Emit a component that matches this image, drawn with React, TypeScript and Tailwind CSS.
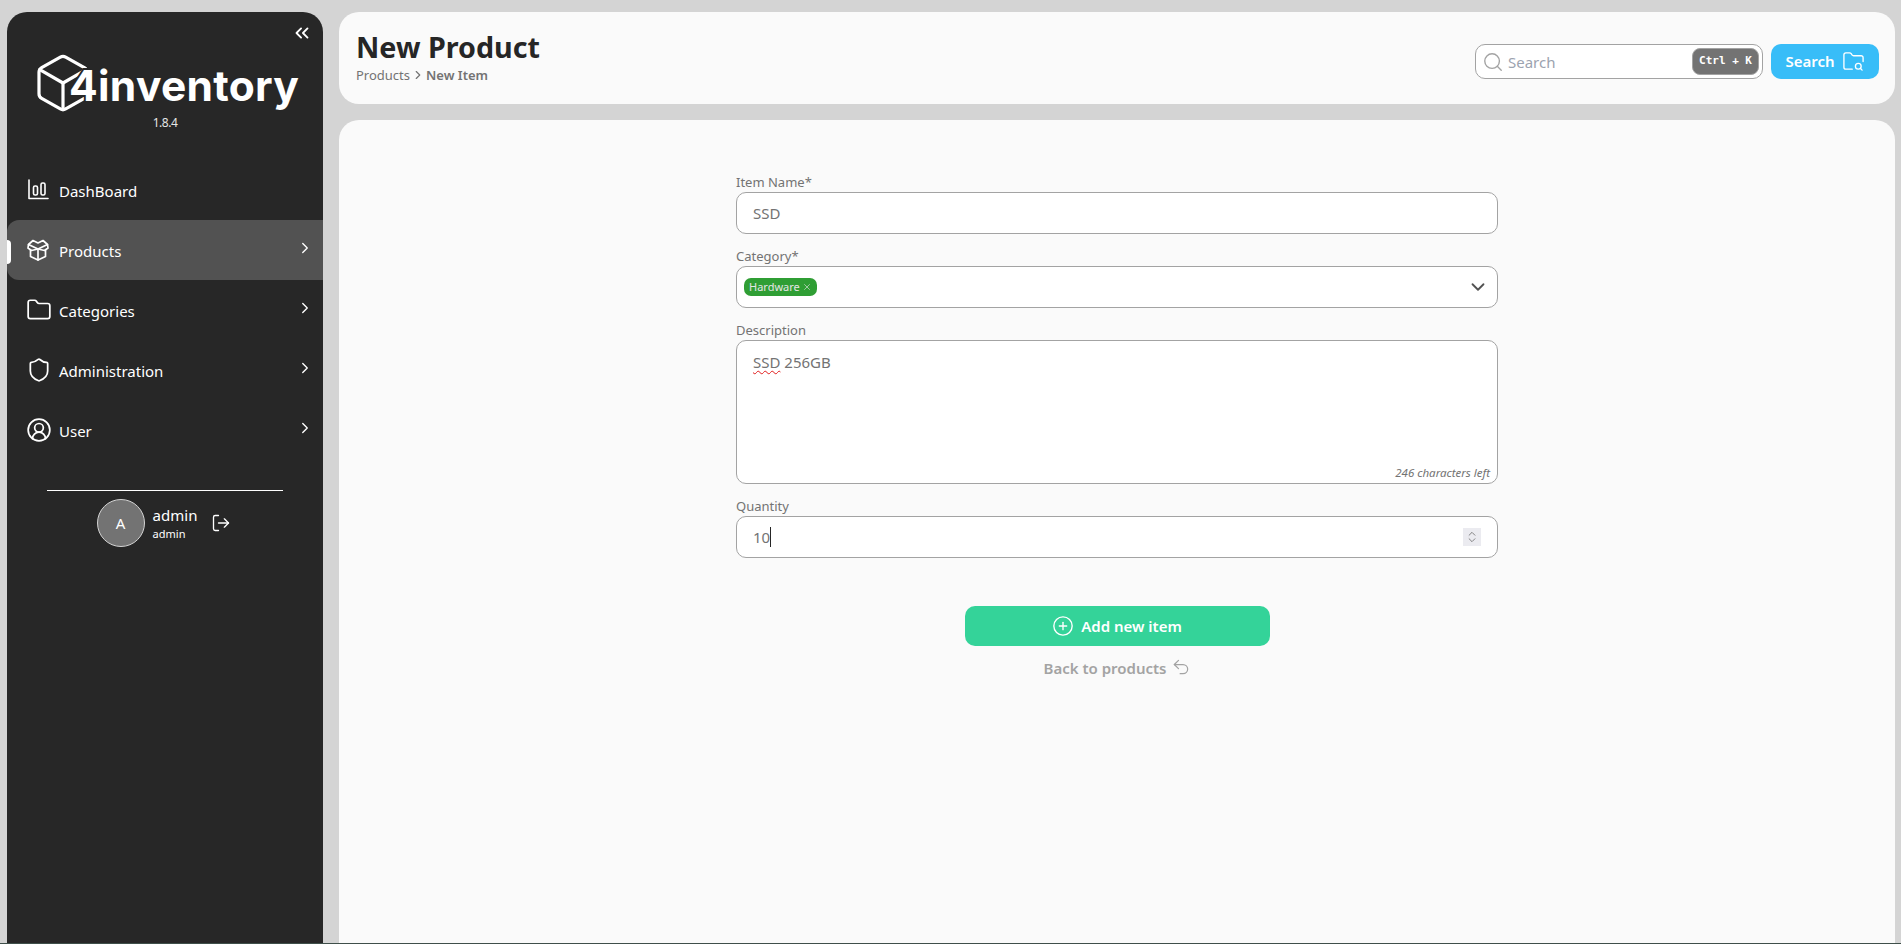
import React from 'react';
import { Box, ChevronDown, ChevronRight, ChevronsLeft, ChevronsUpDown, CirclePlus, CircleUserRound, Folder, FolderSearch, LogOut, Search, Shield, Undo2, X } from 'lucide-react';

const DashIcon = () => (
  <svg width="24" height="24" viewBox="0 0 24 24" fill="none" stroke="currentColor" strokeWidth="1.6" strokeLinecap="round" strokeLinejoin="round">
    <path d="M3 2v18.5h19" />
    <rect x="7.5" y="8" width="4" height="9" rx="1.6" />
    <rect x="15" y="5" width="4" height="12" rx="1.6" />
  </svg>
);

const BoxOpenIcon = () => (
  <svg width="24" height="24" viewBox="0 0 24 24" fill="none" stroke="currentColor" strokeWidth="1.7" strokeLinecap="round" strokeLinejoin="round">
    <path d="M12 11 2.500 6.500 7 2.500l5 2.500 5-2.500 4.500 4z" />
    <path d="M2.500 6.500 2 10l3.500 2.500L12 11l6.500 1.500L22 10l-.5-3.500" />
    <path d="M4.500 12v6.500L12 22l7.500-3.500V12" />
    <path d="M12 11v11" />
  </svg>
);

const navItems = [
  { label: 'DashBoard', icon: <DashIcon />, arrow: false },
  { label: 'Products', icon: <BoxOpenIcon />, arrow: true, active: true },
  { label: 'Categories', icon: <Folder size={26} strokeWidth={1.6} />, arrow: true },
  { label: 'Administration', icon: <Shield size={26} strokeWidth={1.6} />, arrow: true },
  { label: 'User', icon: <CircleUserRound size={26} strokeWidth={1.6} />, arrow: true },
];

const Sidebar = () => (
  <aside className="w-[316px] shrink-0 bg-[#272727] rounded-t-[20px] text-white flex flex-col">
    <div className="flex justify-end pt-[10px] pr-[10px]">
      <ChevronsLeft size={22} strokeWidth={2} />
    </div>
    <div className="flex items-center pl-[24px] mt-[9px] h-[60px]">
      <Box size={64} strokeWidth={1.2} className="shrink-0" />
      <span className="-ml-[26px] mt-[6px] text-[42.5px] leading-none font-bold font-['Inter',sans-serif] tracking-[0.3px] [-webkit-text-stroke:4px_#272727] [paint-order:stroke_fill]">4inventory</span>
    </div>
    <div className="text-center text-[12px] leading-4 mt-[2px] tracking-[-0.5px] text-[#e5e5e5]">1.8.4</div>
    <nav className="mt-[29px] flex flex-col">
      {navItems.map((item) => (
        <div
          key={item.label}
          className={`relative h-[60px] flex items-center pl-[19px] pr-[9px] rounded-l-[12px] ${item.active ? 'bg-[#525252]' : ''}`}
        >
          {item.active && <div className="absolute left-0 top-[20px] w-[4px] h-[24px] bg-white rounded-r-sm"></div>}
          <span className="w-[33px] shrink-0">{item.icon}</span>
          <span className="text-[15px] flex-1 relative top-[1px]">{item.label}</span>
          {item.arrow && <ChevronRight size={18} strokeWidth={1.8} className="relative -top-[2px]" />}
        </div>
      ))}
    </nav>
    <div className="mx-[40px] mt-[30px] border-t border-white"></div>
    <div className="flex items-center justify-center mt-[8px] pr-[2px]">
      <div className="w-[48px] h-[48px] rounded-full bg-[#737373] border border-[#d4d4d4] flex items-center justify-center text-[15px]">A</div>
      <div className="ml-[8px] flex flex-col">
        <span className="text-[15px] leading-[22px]">admin</span>
        <span className="text-[11px] leading-[16px]">admin</span>
      </div>
      <LogOut size={20} strokeWidth={1.6} className="ml-[14px]" />
    </div>
  </aside>
);

const Header = () => (
  <header className="h-[92px] bg-[#fafafa] rounded-[20px] flex items-center justify-between pl-[17px] pr-[16px] shrink-0">
    <div className="-mt-[3px]">
      <h1 className="text-[28.7px] leading-[36px] font-bold text-[#262626]">New Product</h1>
      <div className="flex items-center text-[13px] leading-[18px] text-[#737373] mt-[1px]">
        <span>Products</span>
        <ChevronRight size={14} className="mx-[1px]" />
        <span className="font-semibold">New Item</span>
      </div>
    </div>
    <div className="flex items-center gap-[8px] mt-[7px]">
      <div className="w-[288px] h-[35px] bg-white border border-[#a3a3a3] rounded-[10px] flex items-center pl-[6px] pr-[3px]">
        <Search size={22} strokeWidth={1.5} className="text-[#a3a3a3] shrink-0" />
        <span className="ml-[4px] flex-1 text-[15px] text-[#9ca3af] relative top-[1px]">Search</span>
        <span className="h-[27px] px-[6px] flex items-center rounded-[8px] bg-[#737373] border border-[#a3a3a3] text-white text-[11px] font-bold font-['DejaVu_Sans_Mono',monospace]">Ctrl + K</span>
      </div>
      <button className="w-[108px] h-[35px] bg-[#38bdf8] rounded-[10px] text-white text-[15px] font-semibold flex items-center justify-center gap-[7px]">
        Search
        <FolderSearch size={23} strokeWidth={1.4} />
      </button>
    </div>
  </header>
);

const fieldClass = 'bg-white border border-[#a3a3a3] rounded-[10px] w-full flex items-center text-[15px] text-[#737373]';

const Field = ({ label, children }: { label: string; children: React.ReactNode }) => (
  <div>
    <label className="block text-[13px] leading-[20px] h-[20px] text-[#737373]">{label}</label>
    {children}
  </div>
);

const Form = () => (
  <main className="flex-1 bg-[#fafafa] rounded-t-[20px] flex flex-col items-center pt-[52px]">
    <div className="w-[762px] flex flex-col gap-[12px]">
      <Field label="Item Name*">
        <div className={`${fieldClass} h-[42px] pl-[16px]`}>SSD</div>
      </Field>
      <Field label="Category*">
        <div className={`${fieldClass} h-[42px] pl-[7px] pr-[8px] justify-between`}>
          <span className="h-[18px] px-[5px] bg-[#2f9e34] rounded-[7px] text-[#e5e5e5] text-[11px] flex items-center gap-[2px]">
            Hardware <X size={10} strokeWidth={1.5} />
          </span>
          <ChevronDown size={22} strokeWidth={2} className="text-[#525252]" />
        </div>
      </Field>
      <Field label="Description">
        <div className={`${fieldClass} relative h-[144px] !items-start pl-[16px] pt-[10px]`}>
          <span>
            <span className="underline decoration-wavy decoration-[#e11d1d] decoration-1 underline-offset-2">SSD</span> 256GB
          </span>
          <span className="absolute right-[7px] bottom-[2px] text-[11.500px] italic text-[#737373]">246 characters left</span>
        </div>
      </Field>
      <Field label="Quantity">
        <div className={`${fieldClass} h-[42px] pl-[16px] pr-[16px] justify-between`}>
          <span className="flex items-center">10<span className="w-px h-[20px] bg-[#262626]"></span></span>
          <span className="w-[18px] h-[18px] bg-[#ebebf0] flex items-center justify-center text-[#737373]">
            <ChevronsUpDown size={14} strokeWidth={1.5} />
          </span>
        </div>
      </Field>
    </div>
    <button className="mt-[48px] w-[305px] h-[40px] bg-[#34d399] rounded-[10px] text-white text-[15px] font-semibold flex items-center justify-center gap-[7px]">
      <CirclePlus size={22} strokeWidth={1.5} />
      Add new item
    </button>
    <div className="mt-[11px] flex items-center gap-[4px] text-[15px] font-semibold text-[#a3a3a3]">
      Back to products
      <Undo2 size={20} strokeWidth={1.5} className="-mt-[3px]" />
    </div>
  </main>
);

export default function App() {
  return (
    <div className="h-[944px] overflow-hidden bg-[#d4d4d4] border-b border-[#3f4f4a] flex gap-[16px] pl-[7px] pr-[6px] pt-[12px] font-['Noto_Sans',sans-serif]">
      <Sidebar />
      <div className="flex-1 flex flex-col gap-[16px]">
        <Header />
        <Form />
      </div>
    </div>
  );
}
